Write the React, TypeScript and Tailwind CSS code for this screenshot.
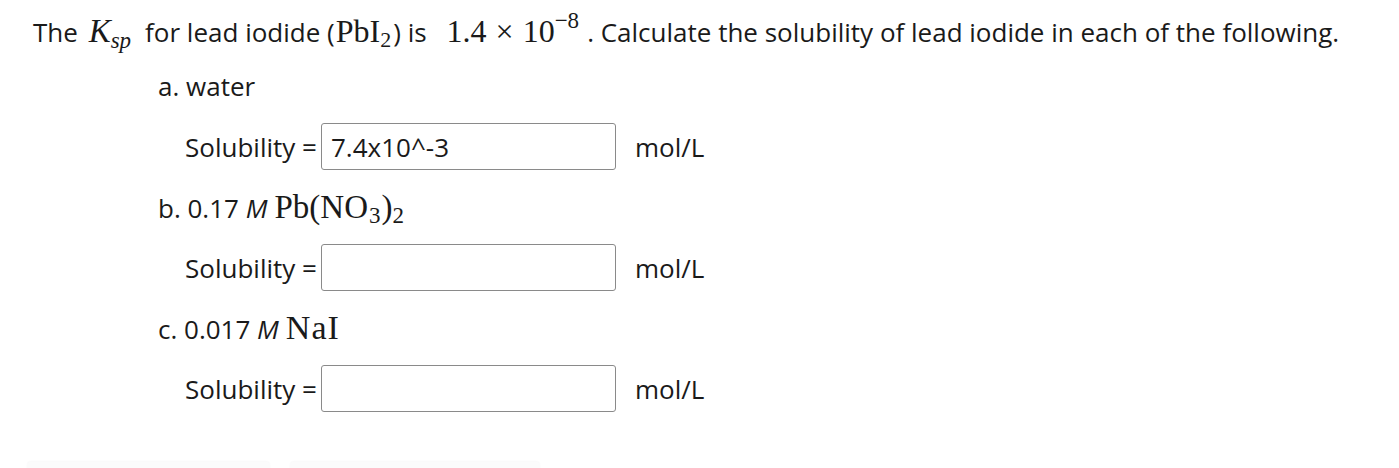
import React from 'react';

const serif = "font-['Liberation_Serif','DejaVu_Serif',serif]";

function Row({ value }: { value?: string }) {
    return (
        <div className="flex items-center pl-[185px] h-[47px]">
            <span className="w-[136px] whitespace-nowrap">Solubility =</span>
            <div className="w-[295px] h-[47px] border border-[#8a8a8a] rounded-[3px] flex items-center px-[9px]">
                {value}
            </div>
            <span className="ml-[19px]">mol/L</span>
        </div>
    );
}

export default function App() {
    return (
        <div className="w-[1399px] h-[468px] bg-white text-[#1a1a1a] font-['Open_Sans',sans-serif] text-[26px] leading-[36px] overflow-hidden relative">
            <div className="pl-[33px] pt-[13px] h-[36px] flex items-baseline whitespace-nowrap">
                <span>The&nbsp;</span>
                <span className={`${serif} text-[33px] italic ml-[4px]`}>K</span>
                <span className={`${serif} text-[23px] italic relative top-[6px] mr-[14px]`}>sp</span>
                <span>for lead iodide (</span>
                <span className={`${serif} text-[32px] ml-[1px]`}>PbI</span>
                <span className={`${serif} text-[22px] relative top-[5px] mr-[2px]`}>2</span>
                <span>) is</span>
                <span className={`${serif} text-[32px] ml-[20px]`}>1.4</span>
                <span className={`${serif} text-[32px] mx-[9px]`}>×</span>
                <span className={`${serif} text-[32px]`}>10</span>
                <span className={`${serif} text-[23px] relative -top-[14px] mr-[8px]`}>−8</span>
                <span>. Calculate the solubility of lead iodide in each of the following.</span>
            </div>

            <div className="pl-[158px] mt-[32px] h-[36px]">a. water</div>
            <div className="mt-[19px]"><Row value="7.4x10^-3" /></div>

            <div className="pl-[158px] mt-[19px] h-[36px] flex items-baseline whitespace-nowrap">
                <span>b. 0.17&nbsp;</span>
                <span className="italic">M</span>
                <span className={`${serif} text-[33px] ml-[7px]`}>Pb(NO</span>
                <span className={`${serif} text-[23px] relative top-[5px] mx-[1px]`}>3</span>
                <span className={`${serif} text-[33px]`}>)</span>
                <span className={`${serif} text-[23px] relative top-[5px]`}>2</span>
            </div>
            <div className="mt-[19px]"><Row /></div>

            <div className="pl-[158px] mt-[19px] h-[36px] flex items-baseline whitespace-nowrap">
                <span>c. 0.017&nbsp;</span>
                <span className="italic">M</span>
                <span className={`${serif} text-[34px] ml-[7px] tracking-[1px]`}>NaI</span>
            </div>
            <div className="mt-[19px]"><Row /></div>

            <div className="flex gap-[20px] pl-[27px] mt-[50px]">
                <div className="w-[243px] h-[20px] rounded-[4px] bg-[#fbfbfb] shadow-[0_-1px_2px_rgba(0,0,0,0.03)]" />
                <div className="w-[250px] h-[20px] rounded-[4px] bg-[#fbfbfb] shadow-[0_-1px_2px_rgba(0,0,0,0.03)]" />
            </div>
        </div>
    );
}
